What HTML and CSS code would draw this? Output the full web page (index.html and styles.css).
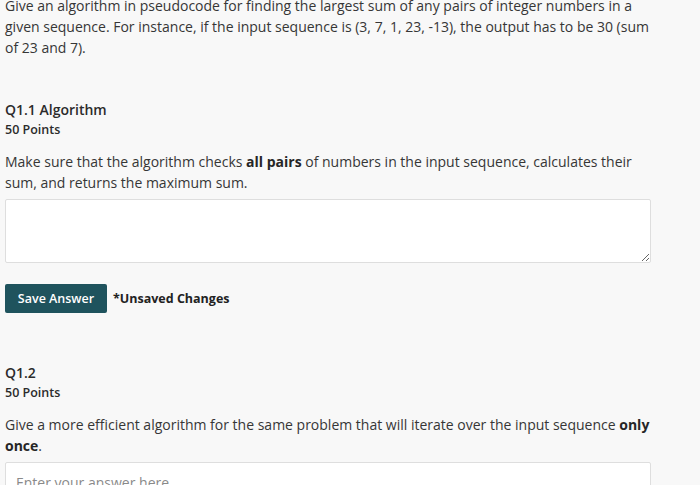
FILE: index.html
```html
<!DOCTYPE html>
<html>
<head>
<meta charset="utf-8">
<link rel="stylesheet" href="styles.css">
</head>
<body>
<main class="page">
  <p class="prompt intro">Give an algorithm in pseudocode for finding the largest sum of any pairs of integer numbers in a given sequence. For instance, if the input sequence is (3, 7, 1, 23, -13), the output has to be 30 (sum of 23 and 7).</p>

  <section class="question q1">
    <h2 class="q-title">Q1.1 Algorithm</h2>
    <div class="q-points">50 Points</div>
    <p class="prompt">Make sure that the algorithm checks <strong>all pairs</strong> of numbers in the input sequence, calculates their sum, and returns the maximum sum.</p>
    <textarea class="answer"></textarea>
    <div class="actions">
      <button class="save">Save Answer</button>
      <span class="unsaved">*Unsaved Changes</span>
    </div>
  </section>

  <section class="question q2">
    <h2 class="q-title">Q1.2</h2>
    <div class="q-points">50 Points</div>
    <p class="prompt">Give a more efficient algorithm for the same problem that will iterate over the input sequence <strong>only once</strong>.</p>
    <textarea class="answer" placeholder="Enter your answer here"></textarea>
  </section>
</main>
</body>
</html>
```

FILE: styles.css
```css
html, body {
  margin: 0;
  padding: 0;
  background: #f8f8f8;
  overflow: hidden;
}
.page {
  font-family: "Open Sans", "Noto Sans", sans-serif;
  color: #363636;
  width: 646px;
  padding-left: 5px;
  margin-top: -5px;
}
.prompt {
  margin: 0;
  font-size: 14px;
  line-height: 21px;
}
.prompt strong { font-weight: 700; color: #262626; }
.question { display: flex; flex-direction: column; }
.q1 { margin-top: 41px; }
.q2 { margin-top: 49px; }
.q-title {
  margin: 0;
  font-size: 14px;
  font-weight: 600;
  line-height: 21px;
  color: #2b2b2b;
}
.q-points {
  font-size: 12.5px;
  font-weight: 600;
  line-height: 19px;
  color: #2b2b2b;
  margin-bottom: 12px;
}
.answer {
  display: block;
  box-sizing: border-box;
  width: 646px;
  height: 64px;
  margin: 6px 0 0;
  border: 1px solid #dedede;
  border-radius: 2px;
  background: #fff;
  font-family: "Open Sans", sans-serif;
  font-size: 14px;
  padding: 10px 10px 8px;
  resize: vertical;
}
.answer::placeholder { color: #8a8a8a; }
.actions {
  display: flex;
  align-items: center;
  gap: 6px;
  margin-top: 21px;
}
.save {
  width: 102px;
  height: 29px;
  border: none;
  border-radius: 2px;
  background: #1f535d;
  color: #fff;
  font-family: "Open Sans", sans-serif;
  font-size: 12.5px;
  font-weight: 600;
  padding: 0;
}
.unsaved {
  font-size: 12.5px;
  font-weight: 700;
  color: #222;
}
```
